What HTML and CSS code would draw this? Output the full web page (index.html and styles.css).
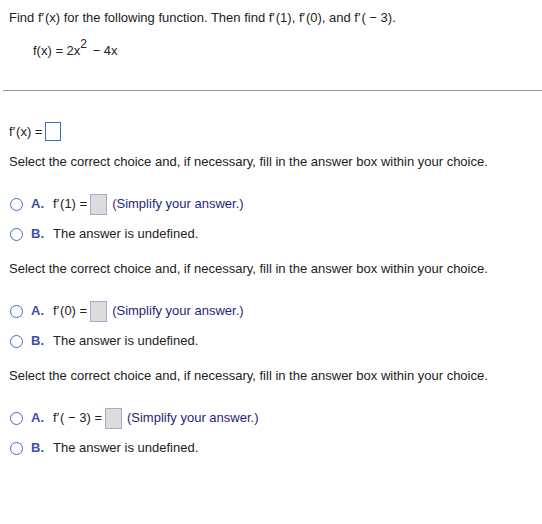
FILE: index.html
```html
<!DOCTYPE html>
<html>
<head>
<meta charset="utf-8">
<link rel="stylesheet" href="styles.css">
</head>
<body>
<div class="prompt">
  <p class="title">Find f<span class="pr">′</span>(x) for the following function. Then find f<span class="pr">′</span>(1), f<span class="pr">′</span>(0), and f<span class="pr">′</span>( − 3).</p>
  <p class="formula">f(x) = 2x<sup>2</sup> − 4x</p>
</div>
<div class="rule"></div>
<div class="answers">
  <p class="deriv">f<span class="pr">′</span>(x) = <span class="box blue"></span></p>

  <p class="select first">Select the correct choice and, if necessary, fill in the answer box within your choice.</p>
  <div class="choices">
    <div class="choice"><span class="radio"></span><span class="letter">A.</span><span class="expr">f<span class="pr">′</span>(1) = </span><span class="box gray"></span><span class="hint">(Simplify your answer.)</span></div>
    <div class="choice"><span class="radio"></span><span class="letter">B.</span><span class="text">The answer is undefined.</span></div>
  </div>

  <p class="select">Select the correct choice and, if necessary, fill in the answer box within your choice.</p>
  <div class="choices">
    <div class="choice"><span class="radio"></span><span class="letter">A.</span><span class="expr">f<span class="pr">′</span>(0) = </span><span class="box gray"></span><span class="hint">(Simplify your answer.)</span></div>
    <div class="choice"><span class="radio"></span><span class="letter">B.</span><span class="text">The answer is undefined.</span></div>
  </div>

  <p class="select">Select the correct choice and, if necessary, fill in the answer box within your choice.</p>
  <div class="choices">
    <div class="choice"><span class="radio"></span><span class="letter">A.</span><span class="expr">f<span class="pr">′</span>( − 3) = </span><span class="box gray"></span><span class="hint">(Simplify your answer.)</span></div>
    <div class="choice"><span class="radio"></span><span class="letter">B.</span><span class="text">The answer is undefined.</span></div>
  </div>
</div>
</body>
</html>
```
FILE: styles.css
```css
html, body {
  margin: 0;
  padding: 0;
  background: #ffffff;
}
body {
  font-family: "Liberation Sans", Arial, sans-serif;
  font-size: 13px;
  line-height: 16px;
  color: #222222;
}
p { margin: 0; }
.pr {
  margin-right: 1px;
}
.prompt {
  padding: 10px 0 0 9px;
}
.title {
  margin: 0;
}
.formula {
  margin: 17px 0 0 24px;
  line-height: 16px;
}
.formula sup {
  font-size: 12px;
  line-height: 0;
  vertical-align: 7px;
  margin-right: 2px;
}
.rule {
  margin: 31px 0 0 3px;
  border-top: 1px solid #8e99ab;
}
.answers {
  padding: 0 9px;
}
.deriv {
  margin-top: 31px;
  display: flex;
  align-items: center;
  height: 19px;
}
.box {
  display: inline-block;
  box-sizing: border-box;
}
.box.blue {
  width: 16px;
  height: 19px;
  border: 1px solid #3d6bd1;
  background: #fff;
  margin-left: 3px;
}
.select {
  margin-top: 13px;
}
.choices {
  margin-top: 26px;
  margin-bottom: 19px;
  display: flex;
  flex-direction: column;
  gap: 14px;
}
.choice {
  display: flex;
  align-items: center;
  height: 16px;
}
.radio {
  width: 13px;
  height: 13px;
  box-sizing: border-box;
  border: 1.5px solid #4a6ad0;
  border-radius: 50%;
  margin-left: 1px;
  margin-right: 8px;
}
.letter {
  font-weight: bold;
  color: #3b4fa6;
  width: 22px;
}
.box.gray {
  width: 17px;
  height: 21px;
  border: 1px solid #a3acd6;
  background: #dcdcdc;
  margin-left: 3px;
  margin-right: 5px;
}
.hint {
  color: #1f1f78;
}
```
